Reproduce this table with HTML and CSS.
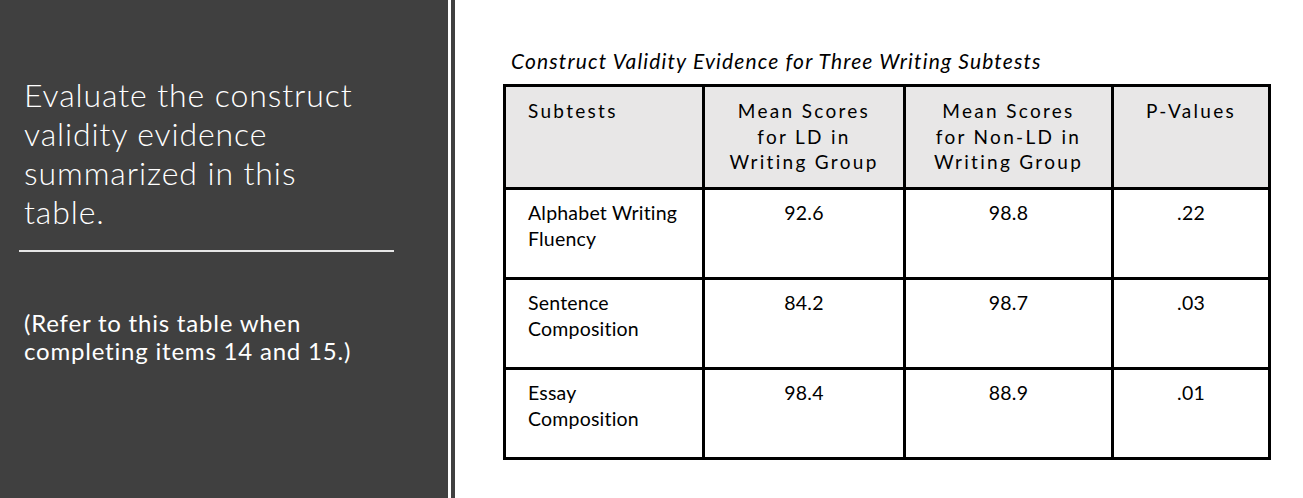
FILE: index.html
```html
<!DOCTYPE html>
<html>
<head>
<meta charset="utf-8">
<link rel="stylesheet" href="styles.css">
</head>
<body>
<div class="slide">
  <aside class="side">
    <h1 class="title">Evaluate the construct<br>validity evidence<br>summarized in this<br>table.</h1>
    <hr class="rule">
    <p class="note">(Refer to this table when<br>completing items 14 and 15.)</p>
  </aside>
  <div class="divider"></div>
  <main class="main">
    <p class="caption">Construct Validity Evidence for Three Writing Subtests</p>
    <table class="grid">
      <colgroup>
        <col class="c1"><col class="c2"><col class="c3"><col class="c4">
      </colgroup>
      <thead>
        <tr>
          <th class="left">Subtests</th>
          <th>Mean Scores<br>for LD in<br>Writing Group</th>
          <th>Mean Scores<br>for Non-LD in<br>Writing Group</th>
          <th>P-Values</th>
        </tr>
      </thead>
      <tbody>
        <tr><td class="left">Alphabet Writing<br>Fluency</td><td>92.6</td><td>98.8</td><td>.22</td></tr>
        <tr><td class="left">Sentence<br>Composition</td><td>84.2</td><td>98.7</td><td>.03</td></tr>
        <tr><td class="left">Essay<br>Composition</td><td>98.4</td><td>88.9</td><td>.01</td></tr>
      </tbody>
    </table>
  </main>
</div>
</body>
</html>
```
FILE: styles.css
```css
html, body {
  margin: 0;
  padding: 0;
  background: #ffffff;
}
.slide {
  display: flex;
  width: 1303px;
  height: 498px;
  overflow: hidden;
}
.side {
  width: 448px;
  flex: none;
  background: #404040;
  color: #ffffff;
  padding: 75px 0 0 0;
  box-sizing: border-box;
  font-family: "Lato", "Liberation Sans", sans-serif;
}
.title {
  margin: 0 0 0 24px;
  font-size: 32px;
  font-weight: 300;
  letter-spacing: 0.9px;
  line-height: 39px;
}
.rule {
  margin: 19px 0 0 19px;
  width: 375px;
  height: 2px;
  border: 0;
  background: #e6e6e6;
}
.note {
  margin: 57px 0 0 24px;
  font-size: 24px;
  letter-spacing: 0.8px;
  line-height: 28px;
  font-weight: 400;
}
.divider {
  flex: none;
  width: 4px;
  margin-left: 3px;
  background: #404040;
}
.main {
  flex: 1;
  padding: 48px 0 0 48px;
  font-family: "Lato", "Liberation Sans", sans-serif;
  color: #000000;
}
.caption {
  margin: 0 0 10px 8px;
  font-size: 21px;
  font-style: italic;
  letter-spacing: 1.15px;
  line-height: 26px;
}
.grid {
  border-collapse: collapse;
  table-layout: fixed;
  width: 765px;
}
.c1 { width: 199px; }
.c2 { width: 201px; }
.c3 { width: 208px; }
.c4 { width: 157px; }
.grid th, .grid td {
  border: 3px solid #000000;
  vertical-align: top;
  text-align: center;
}
.grid th {
  background: #e8e7e7;
  height: 103px;
  box-sizing: border-box;
  font-size: 19px;
  font-weight: 400;
  letter-spacing: 2.3px;
  line-height: 25.5px;
  padding: 11px 4px 0 4px;
}
.grid td {
  height: 90px;
  box-sizing: border-box;
  font-size: 19.5px;
  letter-spacing: 0.2px;
  line-height: 26px;
  padding: 10px 8px 0 8px;
}
.grid .left {
  text-align: left;
  padding-left: 22px;
}
```
